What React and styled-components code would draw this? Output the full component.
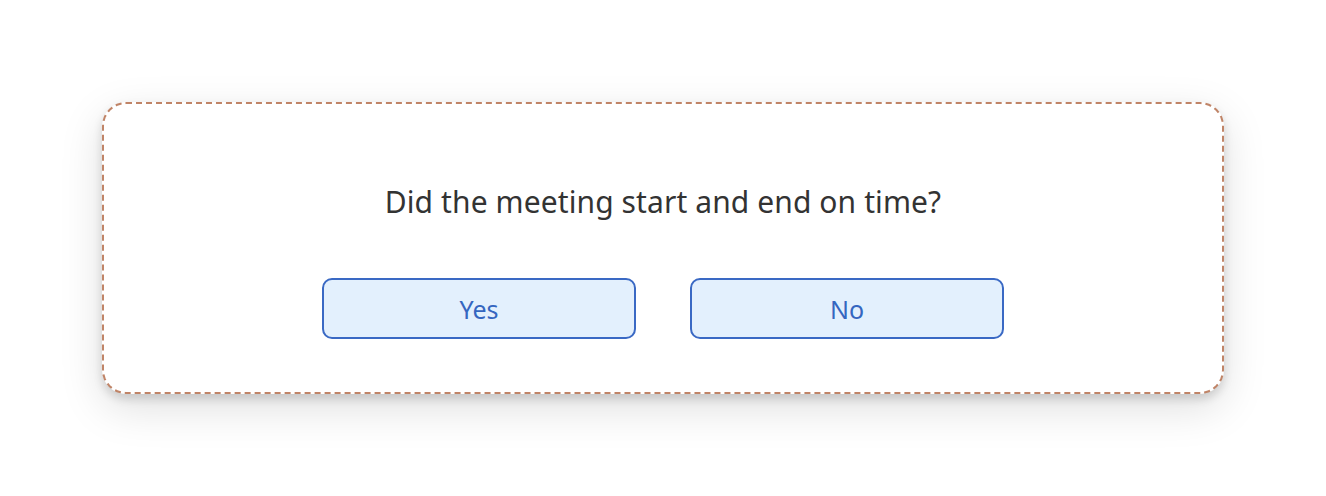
import React from "react";
import styled, { createGlobalStyle } from "styled-components";

const Global = createGlobalStyle`
  html, body { margin: 0; padding: 0; background: #ffffff; }
  body { font-family: "Noto Sans", "Open Sans", sans-serif; }
`;

const Page = styled.div`
  width: 1326px;
  height: 496px;
  display: flex;
  align-items: center;
  justify-content: center;
`;

const Card = styled.div`
  box-sizing: border-box;
  width: 1122px;
  height: 292px;
  border: 2px dashed #c08467;
  border-radius: 24px;
  background: #ffffff;
  box-shadow: 0 14px 44px rgba(0, 0, 0, 0.13), 0 5px 10px rgba(0, 0, 0, 0.14);
  display: flex;
  flex-direction: column;
  align-items: center;
  padding-top: 78px;
`;

const Question = styled.h2`
  margin: 0;
  font-family: "Noto Sans", sans-serif;
  font-weight: 400;
  font-size: 30px;
  line-height: 40px;
  color: #333333;
  letter-spacing: 0.1px;
`;

const Choices = styled.div`
  display: flex;
  gap: 54px;
  margin-top: 56px;
`;

const Choice = styled.button`
  box-sizing: border-box;
  width: 314px;
  height: 61px;
  border: 2px solid #3a69c4;
  border-radius: 10px;
  background: #e3f0fd;
  color: #3566c0;
  font-family: "Noto Sans", sans-serif;
  font-size: 25px;
  cursor: pointer;
  padding: 0;
`;

export default function App() {
  return (
    <Page>
      <Global />
      <Card>
        <Question>Did the meeting start and end on time?</Question>
        <Choices>
          <Choice>Yes</Choice>
          <Choice>No</Choice>
        </Choices>
      </Card>
    </Page>
  );
}
